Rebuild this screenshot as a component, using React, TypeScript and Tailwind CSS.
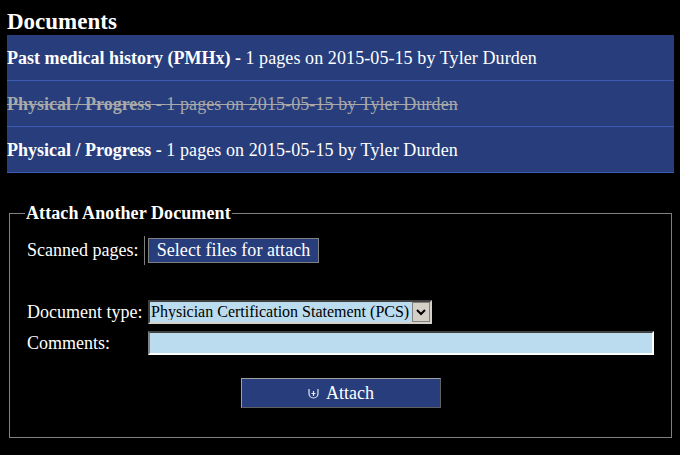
const documents = [
  { name: "Past medical history (PMHx)", deleted: false },
  { name: "Physical / Progress", deleted: true },
  { name: "Physical / Progress", deleted: false },
]

export default function App() {
  return (
    <div className="h-[455px] w-[680px] overflow-hidden bg-black pl-[7px] pr-[6px] pt-[9px] font-['Liberation_Serif',serif] text-[18px] text-white">
      <h2 className="h-[26px] text-[23px] font-bold leading-[26px]">Documents</h2>

      <ul className="bg-[#283e7c]">
        {documents.map((doc, index) => (
          <li
            key={index}
            className={`flex h-[46px] items-center border-b border-[#3b5bb5] pt-[1px] ${doc.deleted ? "text-[#a9a9a9] line-through" : ""}`}
          >
            <span className="tracking-[0.085px]">
              <b className="tracking-normal">{doc.name} - </b>1 pages on 2015-05-15 by Tyler Durden
            </span>
          </li>
        ))}
      </ul>

      <fieldset className="ml-[2px] mr-[2px] mt-[31px] h-[234px] border border-[#808080] pl-[17px] pr-[17px]">
        <legend className="-ml-[2px] px-[1px] font-bold leading-[18px] tracking-[0.09px]">Attach Another Document</legend>

        <div className="mt-[13px] flex h-[30px] items-center">
          <span className="w-[117px]">Scanned pages:</span>
          <div className="flex h-[29px] items-center border-l border-[#808080] pl-[3px]">
            <button className="h-[25px] w-[171px] border border-[#808080] bg-[#283e7c] leading-none tracking-[0.05px]">
              Select files for attach
            </button>
          </div>
        </div>

        <div className="mt-[35px] flex h-[24px] items-center">
          <span className="w-[121px]">Document type:</span>
          <div className="relative h-[24px] w-[284px] border-2 border-b-[#d4d0c8] border-l-[#404040] border-r-[#d4d0c8] border-t-[#404040] bg-[#bbdcee]">
            <select className="block h-[19px] w-full appearance-none bg-transparent pl-[1px] text-[16px] leading-none text-black outline-none">
              <option>Physician Certification Statement (PCS)</option>
            </select>
            <div className="pointer-events-none absolute bottom-0 right-0 top-0 flex w-[18px] items-center justify-center border border-[#808080] bg-[#d4d0c8]">
              <svg width="10" height="7" viewBox="0 0 10 7" fill="none" stroke="black" strokeWidth="2">
                <path d="M1 1l4 4 4-4" />
              </svg>
            </div>
          </div>
        </div>

        <div className="mt-[7px] flex h-[24px] items-center">
          <span className="w-[121px]">Comments:</span>
          <input className="h-[24px] w-[506px] border-2 border-b-white border-l-[#808080] border-r-white border-t-[#404040] bg-[#bbdcee] outline-none" />
        </div>

        <div className="mt-[23px] flex justify-center">
          <button className="flex h-[30px] w-[200px] items-center justify-center gap-[7px] border border-b-[#606060] border-l-[#a0a0a0] border-r-[#606060] border-t-[#a0a0a0] bg-[#283e7c] pl-[1px]">
            <svg width="11" height="11" viewBox="0 0 11 11" fill="none" stroke="#e8e8f0" strokeWidth="1.2">
              <path d="M1 1v4.5a4.5 4.5 0 0 0 9 0V1M5.5 3v5M3.5 5.5h4" />
            </svg>
            Attach
          </button>
        </div>
      </fieldset>
    </div>
  )
}
